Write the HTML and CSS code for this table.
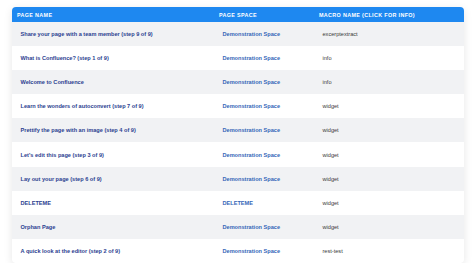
FILE: index.html
```html
<!DOCTYPE html>
<html>
<head>
<meta charset="utf-8">
<link rel="stylesheet" href="styles.css">
</head>
<body>
<div class="table">
  <div class="row head">
    <div class="c1">PAGE NAME</div>
    <div class="c2">PAGE SPACE</div>
    <div class="c3">MACRO NAME (CLICK FOR INFO)</div>
  </div>
  <div class="row odd"><div class="c1">Share your page with a team member (step 9 of 9)</div><div class="c2">Demonstration Space</div><div class="c3">excerptextract</div></div>
  <div class="row"><div class="c1">What is Confluence? (step 1 of 9)</div><div class="c2">Demonstration Space</div><div class="c3">info</div></div>
  <div class="row odd"><div class="c1">Welcome to Confluence</div><div class="c2">Demonstration Space</div><div class="c3">info</div></div>
  <div class="row"><div class="c1">Learn the wonders of autoconvert (step 7 of 9)</div><div class="c2">Demonstration Space</div><div class="c3">widget</div></div>
  <div class="row odd"><div class="c1">Prettify the page with an image (step 4 of 9)</div><div class="c2">Demonstration Space</div><div class="c3">widget</div></div>
  <div class="row"><div class="c1">Let's edit this page (step 3 of 9)</div><div class="c2">Demonstration Space</div><div class="c3">widget</div></div>
  <div class="row odd"><div class="c1">Lay out your page (step 6 of 9)</div><div class="c2">Demonstration Space</div><div class="c3">widget</div></div>
  <div class="row"><div class="c1">DELETEME</div><div class="c2">DELETEME</div><div class="c3">widget</div></div>
  <div class="row odd"><div class="c1">Orphan Page</div><div class="c2">Demonstration Space</div><div class="c3">widget</div></div>
  <div class="row"><div class="c1">A quick look at the editor (step 2 of 9)</div><div class="c2">Demonstration Space</div><div class="c3">rest-test</div></div>
</div>
</body>
</html>
```
FILE: styles.css
```css
html, body {
  margin: 0;
  padding: 0;
  background: #ffffff;
}
body {
  padding: 7px 10px 0 12px;
  font-family: "Liberation Sans", Arial, sans-serif;
}
.table {
  width: 452px;
  border-radius: 4px;
  box-shadow: 0 2px 8px rgba(0, 0, 0, 0.10);
  background: #ffffff;
}
.row {
  display: grid;
  grid-template-columns: 202px 100px 150px;
  height: 24.1px;
  align-items: center;
  font-size: 5.6px;
  font-weight: bold;
}
.row.odd {
  background: #f1f2f4;
}
.row .c1 {
  padding-left: 8.5px;
  color: #2b4190;
}
.row .c2 {
  padding-left: 8.5px;
  color: #3566b8;
}
.row .c3 {
  padding-left: 8.5px;
  color: #3a3a3a;
  font-weight: normal;
}
.row.head {
  height: 15px;
  background: #1e88f0;
  border-radius: 4px 4px 0 0;
  font-size: 5.4px;
  letter-spacing: 0.35px;
}
.row.head > div {
  color: #ffffff;
  padding-left: 5px;
  font-weight: bold;
}
```
